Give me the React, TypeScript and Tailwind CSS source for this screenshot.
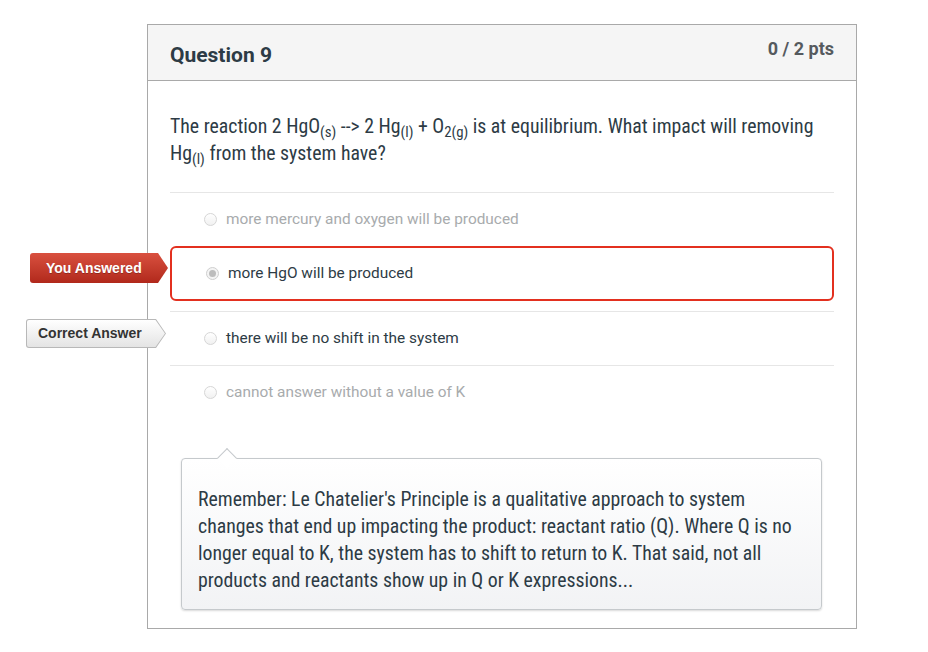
function Radio({ checked }: { checked?: boolean }) {
  if (checked) {
    return (
      <span className="flex h-[13px] w-[13px] shrink-0 items-center justify-center rounded-full border border-[#cfcfcf] bg-[#f4f4f4]">
        <span className="h-[7px] w-[7px] rounded-full bg-[#bdbdbd]" />
      </span>
    )
  }
  return <span className="h-[13px] w-[13px] shrink-0 rounded-full border border-[#d6d6d6] bg-gradient-to-b from-white to-[#f1f1f1]" />
}

// red arrow tag left of the picked answer
function YouAnswered() {
  return (
    <div className="absolute left-[-142px] top-[5px] h-[30px] w-[138px]">
      <div className="flex h-full items-center rounded-l-[3px] bg-gradient-to-b from-[#d9503f] to-[#b1281b] pl-[16px] font-['Liberation_Sans',Arial,sans-serif] text-[14px] font-bold text-white [text-shadow:0_1px_0_rgba(0,0,0,0.25)] [clip-path:polygon(0_0,calc(100%-10px)_0,100%_50%,calc(100%-10px)_100%,0_100%)]">
        You Answered
      </div>
    </div>
  )
}

// gray arrow tag left of the right answer
function CorrectAnswer() {
  return (
    <div className="absolute left-[-144px] top-[7px] h-[29px] w-[140px]">
      <div className="h-full rounded-l-[3px] bg-[#b8b8b8] p-px [clip-path:polygon(0_0,calc(100%-10px)_0,100%_50%,calc(100%-10px)_100%,0_100%)]">
        <div className="flex h-full items-center rounded-l-[2px] bg-gradient-to-b from-white to-[#e4e4e4] pl-[11px] font-['Liberation_Sans',Arial,sans-serif] text-[14px] font-bold text-[#333] [clip-path:polygon(0_0,calc(100%-9.5px)_0,100%_50%,calc(100%-9.5px)_100%,0_100%)]">
          Correct Answer
        </div>
      </div>
    </div>
  )
}

export default function App() {
  return (
    <div className="min-h-[652px] bg-white pl-[147px] pt-6 font-['Roboto',sans-serif] text-[#2d3b45]">
      <div className="w-[710px] border border-[#a9a9a9]">
        {/* header */}
        <div className="flex h-[56px] justify-between border-b border-[#a9a9a9] bg-[#f5f5f5] px-[22px]">
          <h2 className="pt-[17px] text-[21px] font-bold leading-[26px]">Question 9</h2>
          <div className="pt-[13px] text-[18px] font-bold leading-[22px] text-[#555a5e]">0 / 2 pts</div>
        </div>

        {/* body */}
        <div className="px-[22px] pb-[18px] pt-[32px]">
          <p className="text-[19.8px] leading-[27px] [font-stretch:condensed]">
            The reaction 2 HgO<sub>(s)</sub> --&gt; 2 Hg<sub>(l)</sub> + O<sub>2(g)</sub> is at equilibrium. What impact will removing Hg<sub>(l)</sub> from the system have?
          </p>

          <div className="mt-[25px] border-t border-[#e6e6e6] text-[15.4px]">
            <div className="flex h-[53px] items-center gap-[9px] pl-[34px] text-[#a8abad]">
              <Radio />
              <span>more mercury and oxygen will be produced</span>
            </div>

            <div className="relative mb-[10px] flex h-[55px] items-center gap-[9px] rounded-[6px] border-2 border-[#e3301f] pl-[34px]">
              <YouAnswered />
              <Radio checked />
              <span>more HgO will be produced</span>
            </div>

            <div className="relative flex h-[54px] items-center gap-[9px] border-t border-[#e6e6e6] pl-[34px]">
              <CorrectAnswer />
              <Radio />
              <span>there will be no shift in the system</span>
            </div>

            <div className="flex h-[54px] items-center gap-[9px] border-t border-[#e6e6e6] pl-[34px] text-[#a8abad]">
              <Radio />
              <span>cannot answer without a value of K</span>
            </div>
          </div>

          {/* comment */}
          <div className="relative ml-[11px] mr-[12px] mt-[39px] rounded-[4px] border border-[#c5c9cc] bg-gradient-to-b from-white to-[#f2f3f5] px-4 pb-[15px] pt-[27px] shadow-[0_1px_2px_rgba(0,0,0,0.15)]">
            <span className="absolute left-[38px] top-[-8px] h-[14px] w-[14px] rotate-45 border-l border-t border-[#c5c9cc] bg-white" />
            <p className="text-[19.8px] leading-[27px] [font-stretch:condensed]">
              Remember: Le Chatelier's Principle is a qualitative approach to system changes that end up impacting the product: reactant ratio (Q). Where Q is no longer equal to K, the system has to shift to return to K. That said, not all products and reactants show up in Q or K expressions...
            </p>
          </div>
        </div>
      </div>
    </div>
  )
}
